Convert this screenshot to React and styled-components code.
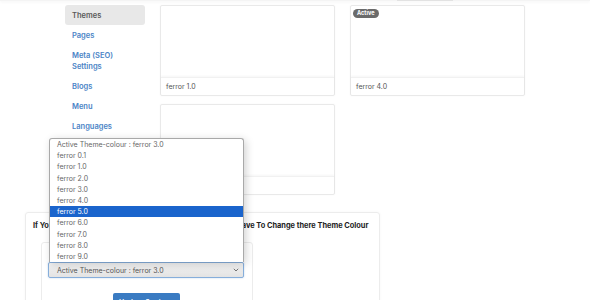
import React from "react";
import styled, { createGlobalStyle } from "styled-components";

const GlobalStyle = createGlobalStyle`
  html, body {
    margin: 0;
    padding: 0;
    background: #ffffff;
    font-family: "Inter", "Noto Sans", sans-serif;
  }
`;

const Page = styled.div`
  width: 590px;
  height: 300px;
  overflow: hidden;
  position: relative;
`;

// thanh trên cùng (chỉ thấy bóng)
const TopBar = styled.div`
  height: 1px;
  background: #f4f4f4;
  box-shadow: 0 1px 3px rgba(0, 0, 0, 0.08);
  display: flex;
  justify-content: flex-start;
  padding-left: 397px;
`;

const TopTab = styled.div`
  width: 56px;
  height: 1px;
  background: #e2e2e2;
`;

const Main = styled.div`
  display: flex;
  gap: 15px;
  padding: 4px 0 0 65px;
`;

const Sidebar = styled.nav`
  width: 80px;
  display: flex;
  flex-direction: column;
`;

const NavItem = styled.div`
  padding: 4.5px 7px;
  line-height: 11px;
  font-size: 7.5px;
  font-weight: 600;
  border-radius: 3px;
  color: ${(p) => (p.$active ? "#595959" : "#4a84c6")};
  background: ${(p) => (p.$active ? "#e8e8e8" : "transparent")};
`;

const CardGrid = styled.div`
  display: grid;
  grid-template-columns: 175px 175px;
  column-gap: 15px;
  row-gap: 8px;
  align-content: start;
`;

const ThemeCard = styled.div`
  height: 91px;
  border: 1px solid #e9e9e9;
  border-radius: 2px;
  box-sizing: border-box;
  display: flex;
  flex-direction: column;
  box-shadow: 0 0 2px rgba(0, 0, 0, 0.04);
`;

const Preview = styled.div`
  flex: 1;
  display: flex;
  align-items: flex-start;
  padding: 3px 2px;
`;

const Badge = styled.span`
  background: #6b6b6b;
  color: #ffffff;
  font-size: 5.6px;
  font-weight: 700;
  line-height: 9px;
  padding: 0 4px;
  border-radius: 5px;
`;

const CardFooter = styled.div`
  height: 17px;
  display: flex;
  align-items: center;
  padding-left: 5px;
  font-size: 7px;
  color: #555555;
  border-top: 1px solid #f1f1f1;
  box-shadow: 0 -1px 2px rgba(0, 0, 0, 0.04);
`;

const SettingsPanel = styled.section`
  margin: 17px 0 0 25px;
  width: 355px;
  height: 120px;
  box-sizing: border-box;
  border: 1px solid #ececec;
  border-radius: 3px;
  padding: 8px 7px 0;
  box-shadow: 0 0 3px rgba(0, 0, 0, 0.04);
`;

const PanelTitle = styled.div`
  font-size: 7.4px;
  font-weight: 700;
  color: #222222;
  line-height: 9px;
  white-space: nowrap;
`;

const InnerBox = styled.div`
  margin: 12px 0 0 8px;
  width: 212px;
  height: 80px;
  box-sizing: border-box;
  border: 1px solid #ececec;
  border-radius: 3px;
  padding: 19px 8px 0 6px;
  display: flex;
  flex-direction: column;
  align-items: center;
`;

const SelectWrap = styled.div`
  position: relative;
  width: 100%;
`;

const SelectBox = styled.div`
  height: 16px;
  box-sizing: border-box;
  border: 1px solid #86aedb;
  border-radius: 2px;
  background: linear-gradient(#f3f3f3, #e3e3e3);
  box-shadow: 0 0 2px rgba(74, 132, 198, 0.35);
  display: flex;
  align-items: center;
  justify-content: space-between;
  padding: 0 4px 0 8px;
  font-size: 7px;
  color: #555555;
`;

const OptionList = styled.ul`
  position: absolute;
  left: 1px;
  right: 0;
  bottom: 16px;
  height: 124px;
  margin: 0;
  padding: 0;
  list-style: none;
  background: #ffffff;
  border: 1px solid #a9a9a9;
  border-bottom: none;
  border-radius: 3px 3px 0 0;
  box-sizing: border-box;
  box-shadow: 2px 2px 8px rgba(0, 0, 0, 0.18);
  overflow: hidden;
`;

const Option = styled.li`
  height: 11.2px;
  line-height: 11.2px;
  padding-left: 7px;
  font-size: 7px;
  color: ${(p) => (p.$selected ? "#ffffff" : "#666666")};
  background: ${(p) => (p.$selected ? "#1a64cc" : "transparent")};
`;

const UpdateButton = styled.button`
  margin-top: 15px;
  width: 67px;
  height: 18px;
  border: none;
  border-radius: 2px;
  background: #3a7bc2;
  color: #ffffff;
  font-family: inherit;
  font-size: 7px;
  font-weight: 600;
`;

const themes = [
  { name: "ferror 1.0", active: false },
  { name: "ferror 4.0", active: true },
  { name: "ferror 3.0", active: false },
];

const options = [
  "Active Theme-colour : ferror 3.0",
  "ferror 0.1",
  "ferror 1.0",
  "ferror 2.0",
  "ferror 3.0",
  "ferror 4.0",
  "ferror 5.0",
  "ferror 6.0",
  "ferror 7.0",
  "ferror 8.0",
  "ferror 9.0",
];

const Chevron = () => (
  <svg width="6" height="4" viewBox="0 0 6 4">
    <path d="M0.8 0.8 L3 3 L5.2 0.8" fill="none" stroke="#666" strokeWidth="0.9" />
  </svg>
);

export default function App() {
  return (
    <Page>
      <GlobalStyle />
      <TopBar>
        <TopTab />
      </TopBar>
      <Main>
        <Sidebar>
          <NavItem $active>Themes</NavItem>
          <NavItem>Pages</NavItem>
          <NavItem>Meta (SEO)<br />Settings</NavItem>
          <NavItem>Blogs</NavItem>
          <NavItem>Menu</NavItem>
          <NavItem>Languages</NavItem>
        </Sidebar>
        <CardGrid>
          {themes.map((t) => (
            <ThemeCard key={t.name}>
              <Preview>{t.active && <Badge>Active</Badge>}</Preview>
              <CardFooter>{t.name}</CardFooter>
            </ThemeCard>
          ))}
        </CardGrid>
      </Main>
      <SettingsPanel>
        <PanelTitle>
          If You Want To Change The Theme Of Website Then You Have To Change there Theme Colour
        </PanelTitle>
        <InnerBox>
          <SelectWrap>
            <SelectBox>
              Active Theme-colour : ferror 3.0
              <Chevron />
            </SelectBox>
            <OptionList>
              {options.map((o, i) => (
                <Option key={i} $selected={o === "ferror 5.0"}>{o}</Option>
              ))}
            </OptionList>
          </SelectWrap>
          <UpdateButton>Update Settings</UpdateButton>
        </InnerBox>
      </SettingsPanel>
    </Page>
  );
}
